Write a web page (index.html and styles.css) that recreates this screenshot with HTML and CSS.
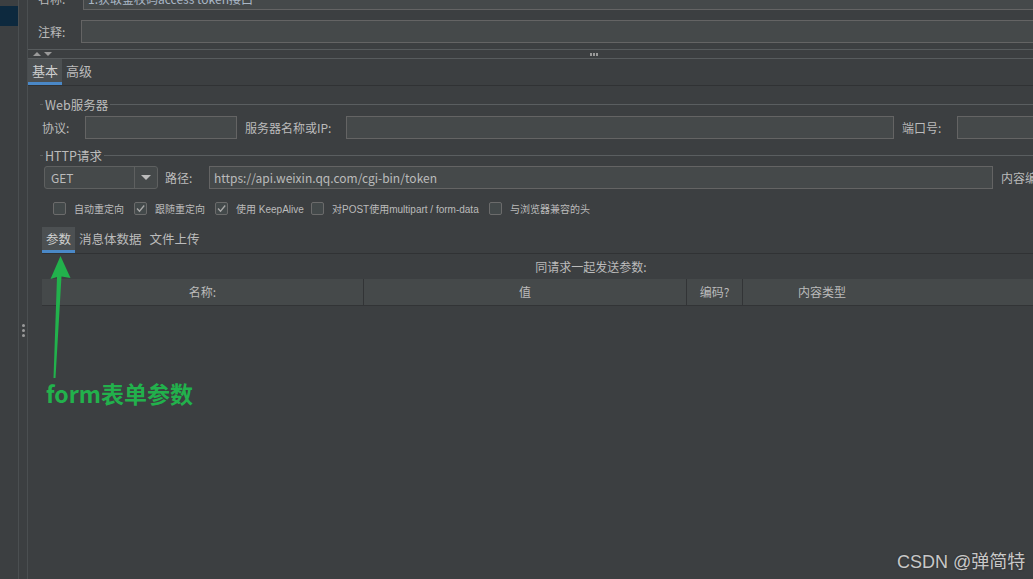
FILE: index.html
```html
<!DOCTYPE html>
<html lang="zh">
<head>
<meta charset="utf-8">
<title>HTTP请求</title>
<link rel="stylesheet" href="styles.css">
</head>
<body>
<div class="app">
  <div class="tree"><div class="tree-sel"></div></div>
  <div class="splitter"><span class="vdots"><i></i><i></i><i></i></span></div>
  <div class="main">
    <div class="row name-row">
      <span class="lbl w-name">名称:</span>
      <div class="input grow edge">1.获取鉴权码access token接口</div>
    </div>
    <div class="row comment-row">
      <span class="lbl w-comment">注释:</span>
      <div class="input grow edge"></div>
    </div>
    <div class="divider">
      <span class="updown"><i class="tri-up"></i><i class="tri-down"></i></span>
      <span class="hdots"><i></i><i></i><i></i></span>
    </div>
    <div class="tabs">
      <span class="tab active">基本</span>
      <span class="tab">高级</span>
    </div>
    <div class="content">
      <div class="legend"><span>Web服务器</span></div>
      <div class="row srv-row">
        <span class="lbl w-proto">协议:</span>
        <div class="input w-proto-in"></div>
        <span class="lbl w-host">服务器名称或IP:</span>
        <div class="input w-host-in"></div>
        <span class="lbl w-port">端口号:</span>
        <div class="input grow edge"></div>
      </div>
      <div class="legend http"><span>HTTP请求</span></div>
      <div class="row req-row">
        <div class="combo"><span class="combo-val">GET</span><span class="combo-btn"><i class="tri-down big"></i></span></div>
        <span class="lbl w-path">路径:</span>
        <div class="input w-path-in">https://api.weixin.qq.com/cgi-bin/token</div>
        <span class="lbl enc">内容编码:</span>
      </div>
      <div class="checks">
        <span class="chk w1"><i class="box"></i>自动重定向</span>
        <span class="chk w1"><i class="box on"><svg viewBox="0 0 11 11"><path d="M2 5.5 L4.5 8.2 L9.2 2.5"/></svg></i>跟随重定向</span>
        <span class="chk w3"><i class="box on"><svg viewBox="0 0 11 11"><path d="M2 5.5 L4.5 8.2 L9.2 2.5"/></svg></i>使用 KeepAlive</span>
        <span class="chk w4"><i class="box"></i>对POST使用multipart / form-data</span>
        <span class="chk"><i class="box"></i>与浏览器兼容的头</span>
      </div>
      <div class="subtabs">
        <span class="tab sub active">参数</span>
        <span class="tab sub">消息体数据</span>
        <span class="tab sub">文件上传</span>
      </div>
      <div class="caption">同请求一起发送参数:</div>
      <div class="thead">
        <span class="th">名称:</span>
        <span class="th">值</span>
        <span class="th">编码?</span>
        <span class="th last">内容类型</span>
      </div>
    </div>
  </div>
</div>

<svg class="anno-arrow" width="40" height="130" viewBox="40 250 40 130">
  <polygon points="60.5,256 70.5,278 61.5,276.5 55.5,378 53.5,378 57,277 50.5,279"/>
</svg>
<div class="anno-text">form表单参数</div>
<div class="watermark">CSDN @弹简特</div>
</body>
</html>
```
FILE: styles.css
```css
html, body {
  margin: 0;
  padding: 0;
}
body {
  width: 1033px;
  height: 579px;
  overflow: hidden;
  position: relative;
  background: #3c3f41;
  color: #bbbbbb;
  font-family: "Noto Sans CJK SC", "Noto Sans", sans-serif;
  font-size: 12px;
}
.app {
  display: flex;
  height: 579px;
}
.tree {
  width: 18px;
  flex: none;
  border-right: 1px solid #4b4f51;
}
.tree-sel {
  margin-top: 6px;
  height: 20px;
  background: #0d293e;
}
.splitter {
  width: 9px;
  flex: none;
  border-right: 1px solid #4b4f51;
  display: flex;
  justify-content: center;
  padding-top: 324px;
  box-sizing: border-box;
}
.vdots {
  display: flex;
  flex-direction: column;
  gap: 2px;
}
.vdots i {
  display: block;
  width: 3px;
  height: 3px;
  border-radius: 50%;
  background: #9a9a9a;
}
.main {
  flex: 1;
  min-width: 0;
  overflow: hidden;
}
.row {
  display: flex;
  align-items: center;
  height: 23px;
}
.name-row {
  margin-top: -13px;
  padding-left: 10px;
}
.comment-row {
  margin-top: 10px;
  padding-left: 10px;
}
.lbl {
  flex: none;
  white-space: nowrap;
}
.w-name { width: 45px; }
.w-comment { width: 43px; }
.input {
  height: 23px;
  box-sizing: border-box;
  border: 1px solid #646464;
  background: #45494a;
  padding-left: 4px;
  line-height: 21px;
  white-space: nowrap;
  overflow: hidden;
  flex: none;
}
.grow { flex: 1; }
.edge { margin-right: -3px; }
.name-row .input { color: #a9b7c6; }

.divider {
  margin-top: 6px;
  height: 8px;
  border-top: 1px solid #585c5e;
  border-bottom: 1px solid #585c5e;
  display: flex;
  align-items: center;
}
.updown {
  display: flex;
  gap: 3px;
  margin-left: 5px;
}
.tri-up {
  width: 0; height: 0;
  border-left: 4px solid transparent;
  border-right: 4px solid transparent;
  border-bottom: 4px solid #9a9a9a;
}
.tri-down {
  width: 0; height: 0;
  border-left: 4px solid transparent;
  border-right: 4px solid transparent;
  border-top: 4px solid #9a9a9a;
}
.tri-down.big {
  border-left-width: 5px;
  border-right-width: 5px;
  border-top: 5px solid #bbbbbb;
}
.hdots {
  display: flex;
  gap: 1px;
  margin-left: 538px;
}
.hdots i {
  display: block;
  width: 2px;
  height: 3px;
  background: #9a9a9a;
}
.tabs {
  display: flex;
  height: 26px;
  border-bottom: 1px solid #303234;
}
.tab {
  padding: 0 4px;
  line-height: 24px;
  font-size: 13px;
  color: #bbbbbb;
}
.tab.active {
  background: #4c5052;
  box-shadow: inset 0 -3px 0 #4a88c7;
  color: #d0d0d0;
}
.content {
  padding-left: 14px;
}
.legend {
  display: flex;
  align-items: center;
  height: 16px;
  margin-top: 10px;
  margin-left: -2px;
}
.legend::before {
  content: "";
  width: 3px;
  border-top: 1px solid #5a5e60;
  margin-right: 2px;
}
.legend::after {
  content: "";
  flex: 1;
  border-top: 1px solid #5a5e60;
  margin-left: 2px;
}
.legend span { font-size: 12.5px; }
.legend.http { margin-top: 8px; }
.srv-row { margin-top: 4px; }
.w-proto { width: 43px; }
.w-proto-in { width: 152px; }
.w-host { width: 101px; margin-left: 8px; }
.w-host-in { width: 548px; }
.w-port { width: 55px; margin-left: 8px; }
.req-row { margin-top: 3px; }
.combo {
  display: flex;
  width: 114px;
  height: 23px;
  box-sizing: border-box;
  margin-left: 2px;
  border: 1px solid #5e6060;
  border-radius: 3px;
  background: #45494a;
  flex: none;
}
.combo-val {
  flex: 1;
  padding-left: 6px;
  line-height: 21px;
}
.combo-btn {
  width: 22px;
  border-left: 1px solid #5e6060;
  display: flex;
  align-items: center;
  justify-content: center;
}
.w-path { width: 44px; margin-left: 7px; }
.w-path-in { width: 784px; }
.enc { margin-left: 8px; }
.checks {
  display: flex;
  align-items: center;
  height: 14px;
  margin-top: 12px;
  padding-left: 11px;
  font-family: "Liberation Sans", "Noto Sans CJK SC", sans-serif;
  font-size: 10px;
  white-space: nowrap;
}
.chk {
  display: flex;
  align-items: center;
  flex: none;
}
.w1 { width: 81px; }
.w3 { width: 96px; }
.w4 { width: 178px; }
.box {
  width: 13px;
  height: 13px;
  box-sizing: border-box;
  border: 1px solid #6b6b6b;
  border-radius: 2px;
  background: #43494a;
  margin-right: 8px;
  display: flex;
  align-items: center;
  justify-content: center;
}
.box svg {
  width: 11px;
  height: 11px;
}
.box svg path {
  fill: none;
  stroke: #a8a8a8;
  stroke-width: 1.3;
}
.subtabs {
  display: flex;
  height: 26px;
  margin-top: 12px;
  border-bottom: 1px solid #303234;
}
.tab.sub { font-size: 12.5px; }
.caption {
  width: 1098px;
  height: 25px;
  line-height: 26px;
  text-align: center;
}
.thead {
  display: grid;
  grid-template-columns: 322px 323px 56px 1fr;
  height: 26px;
  background: #45494a;
  border-bottom: 1px solid #323436;
}
.th {
  text-align: center;
  line-height: 26px;
  border-right: 1px solid #323436;
}
.th.last {
  border-right: none;
  text-align: left;
  padding-left: 55px;
}
.anno-arrow {
  position: absolute;
  left: 40px;
  top: 250px;
}
.anno-arrow polygon {
  fill: #22b14c;
}
.anno-text {
  position: absolute;
  left: 46px;
  top: 376px;
  font-family: "Noto Sans CJK SC", sans-serif;
  font-weight: 700;
  font-size: 23px;
  color: #22b14c;
}
.watermark {
  position: absolute;
  left: 897px;
  top: 547px;
  font-family: "Liberation Sans", "Noto Sans CJK SC", sans-serif;
  font-size: 18px;
  color: #c8c8c8;
  text-shadow: 0 0 2px #2a2a2a;
}
```
